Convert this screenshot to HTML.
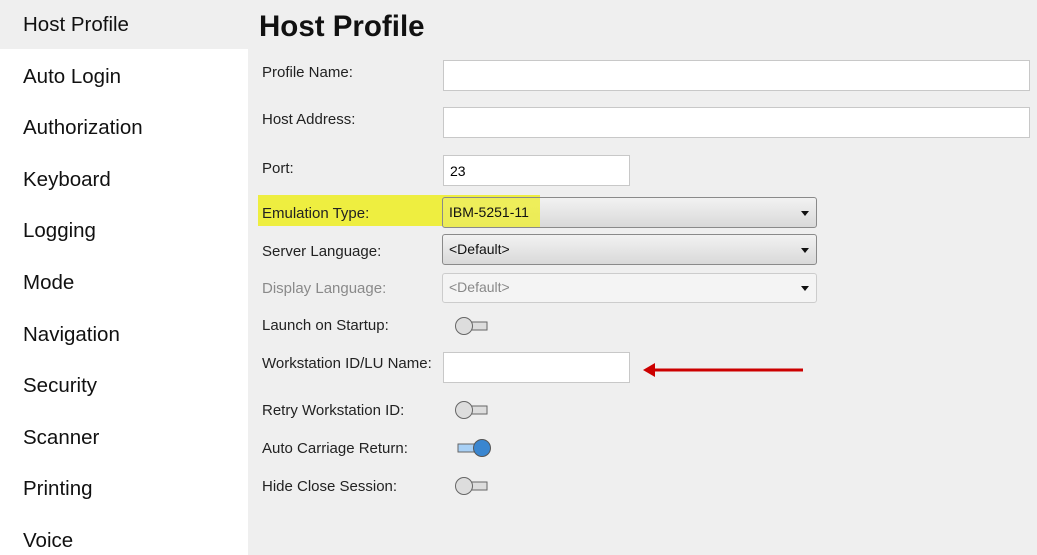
<!DOCTYPE html>
<html><head><style>
body{margin:0;width:1037px;height:555px;overflow:hidden;background:#efefef;font-family:"Liberation Sans",sans-serif;position:relative}
.side{position:absolute;left:0;top:0;width:248px;height:555px;background:#fff}
.side div{position:absolute;left:23px;font-size:20.5px;color:#111;line-height:24px}
.sel{position:absolute;left:0;top:0;width:248px;height:49px;background:#efefef}
.a{position:absolute}
.lbl{position:absolute;left:262px;font-size:15px;color:#222}
.in{position:absolute;background:#fff;border:1px solid #c8c8c8;box-sizing:border-box;font-size:14px;padding-left:6px}
.dd{position:absolute;left:442px;width:375px;box-sizing:border-box;border:1px solid #8a8a8a;border-radius:3px;background:linear-gradient(#f2f2f2,#d9d9d9);font-size:14px;padding-left:6px;color:#111}
.dd:after{content:"";position:absolute;right:7px;top:50%;margin-top:-2px;border:4px solid transparent;border-top:5px solid #111}
.tg{position:absolute;width:40px;height:20px}
</style></head><body>
<div class="side"><div class="sel" style="left:0"></div>
<div style="top:13px">Host Profile</div>
<div style="top:65px">Auto Login</div>
<div style="top:116px">Authorization</div>
<div style="top:168px">Keyboard</div>
<div style="top:219px">Logging</div>
<div style="top:271px">Mode</div>
<div style="top:323px">Navigation</div>
<div style="top:374px">Security</div>
<div style="top:426px">Scanner</div>
<div style="top:477px">Printing</div>
<div style="top:529px">Voice</div>
</div>
<div class="a" style="left:259px;top:10px;font-size:29.5px;font-weight:bold;color:#111">Host Profile</div>
<div class="lbl" style="top:64px">Profile Name:</div>
<div class="in" style="left:443px;top:60px;width:587px;height:31px"></div>
<div class="lbl" style="top:111px">Host Address:</div>
<div class="in" style="left:443px;top:107px;width:587px;height:31px"></div>
<div class="lbl" style="top:160px">Port:</div>
<div class="in" style="left:443px;top:155px;width:187px;height:31px;line-height:31px">23</div>
<div class="a" style="left:258px;top:195px;width:282px;height:31px;background:#eeee40"></div>
<div class="dd" style="top:197px;height:31px;line-height:29px;background:linear-gradient(90deg,rgba(238,238,64,.85) 0,rgba(238,238,64,.85) 26%,transparent 26%),linear-gradient(#f2f2f2,#d9d9d9)">IBM-5251-11</div>
<div class="lbl" style="top:205px">Emulation Type:</div>
<div class="lbl" style="top:243px">Server Language:</div>
<div class="dd" style="top:234px;height:31px;line-height:28px">&lt;Default&gt;</div>
<div class="lbl" style="top:280px;color:#8a8a8a">Display Language:</div>
<div class="dd" style="top:273px;height:30px;line-height:27px;border-color:#ccc;background:#f4f4f4;color:#888">&lt;Default&gt;</div>
<div class="lbl" style="top:317px">Launch on Startup:</div>
<svg class="tg" style="left:454px;top:316px" viewBox="0 0 40 20"><rect x="15" y="6" width="18" height="8" fill="#ddd" stroke="#666"/><circle cx="10" cy="10" r="8.5" fill="#ddd" stroke="#666"/></svg>
<div class="lbl" style="top:355px">Workstation ID/LU Name:</div>
<div class="in" style="left:443px;top:352px;width:187px;height:31px"></div>
<svg class="a" style="left:640px;top:360px" width="170" height="20"><line x1="12" y1="10" x2="163" y2="10" stroke="#c00" stroke-width="3"/><polygon points="3,10 15,3 15,17" fill="#c00"/></svg>
<div class="lbl" style="top:402px">Retry Workstation ID:</div>
<svg class="tg" style="left:454px;top:400px" viewBox="0 0 40 20"><rect x="15" y="6" width="18" height="8" fill="#ddd" stroke="#666"/><circle cx="10" cy="10" r="8.5" fill="#ddd" stroke="#666"/></svg>
<div class="lbl" style="top:440px">Auto Carriage Return:</div>
<svg class="tg" style="left:456px;top:438px" viewBox="0 0 40 20"><rect x="2" y="6" width="18" height="8" fill="#a8d0f5" stroke="#666"/><circle cx="26" cy="10" r="8.5" fill="#3a86d0" stroke="#555"/></svg>
<div class="lbl" style="top:478px">Hide Close Session:</div>
<svg class="tg" style="left:454px;top:476px" viewBox="0 0 40 20"><rect x="15" y="6" width="18" height="8" fill="#ddd" stroke="#666"/><circle cx="10" cy="10" r="8.5" fill="#ddd" stroke="#666"/></svg>
</body></html>
